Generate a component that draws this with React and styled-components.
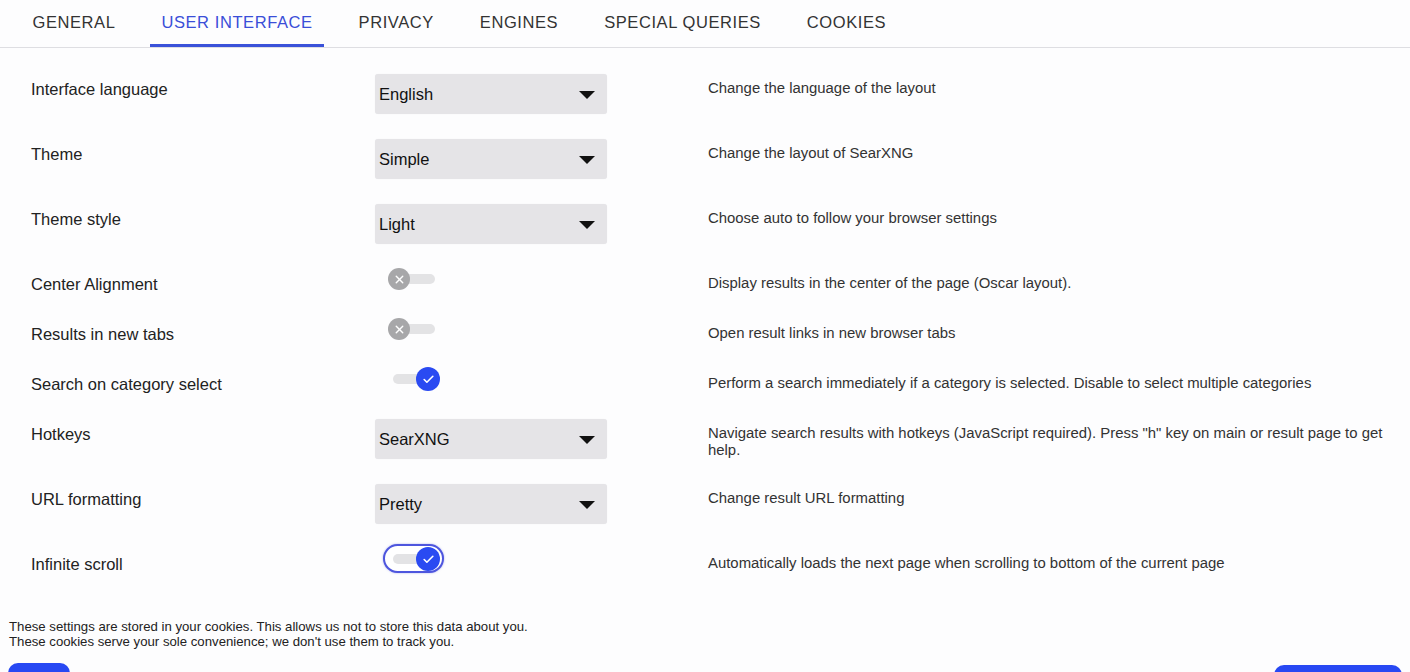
import React from 'react';
import styled, { createGlobalStyle } from 'styled-components';
import { X, Check } from 'lucide-react';

const GlobalStyle = createGlobalStyle`
  html, body {
    margin: 0;
    padding: 0;
    overflow: hidden;
    background: #fdfdfe;
  }
  * {
    box-sizing: border-box;
  }
`;

const Page = styled.div`
  font-family: 'Liberation Sans', Arial, sans-serif;
  color: #222;
  min-height: 672px;
  background: #fdfdfe;
`;

const TabBar = styled.nav`
  display: flex;
  gap: 23px;
  padding-left: 21px;
  border-bottom: 1px solid #dedee2;
`;

const Tab = styled.div`
  height: 47px;
  padding: 0 11.5px;
  display: flex;
  align-items: center;
  font-size: 16.5px;
  letter-spacing: 0.58px;
  text-transform: uppercase;
  color: ${p => (p.$active ? '#3a4ed8' : '#333')};
  border-bottom: 3px solid ${p => (p.$active ? '#3a52d9' : 'transparent')};
`;

const Settings = styled.div`
  padding-top: 26px;
`;

const Row = styled.div`
  display: grid;
  grid-template-columns: 344px 333px 1fr;
  height: ${p => (p.$tall ? 40 : 25)}px;
  margin-bottom: 25px;
  padding: 0 15px 0 31px;
`;

const Label = styled.div`
  font-size: 16.5px;
  line-height: 31px;
  color: #222;
  white-space: nowrap;
`;

const Select = styled.div`
  position: relative;
  width: 232px;
  height: 40px;
  background: #e5e4e7;
  border-radius: 3px;
  padding-left: 4px;
  display: flex;
  align-items: center;
  font-size: 16.5px;
  color: #111;
  box-shadow: 0 0 1px rgba(0, 0, 0, 0.08);

  &::after {
    content: '';
    position: absolute;
    right: 12px;
    top: 17px;
    border-left: 8px solid transparent;
    border-right: 8px solid transparent;
    border-top: 8px solid #111;
  }
`;

const Desc = styled.div`
  font-size: 14.9px;
  line-height: 17px;
  padding-top: 6px;
  color: #333;
`;

const ToggleBox = styled.div`
  position: relative;
  width: 52px;
  height: 22px;
  margin: -1px 0 0 13px;

  &::before {
    content: ${p => (p.$focused ? "''" : 'none')};
    position: absolute;
    left: -5px;
    right: -4px;
    top: -4px;
    bottom: -3px;
    border: 2px solid #4e56de;
    border-radius: 15px;
    background: #fff;
    box-shadow: 0 0 2px rgba(78, 86, 222, 0.5);
  }
`;

const Track = styled.div`
  position: absolute;
  left: ${p => (p.$on ? 5 : 7)}px;
  right: ${p => (p.$on ? 10 : 5)}px;
  top: 6px;
  height: 10px;
  border-radius: 5px;
  background: #e3e3e5;
`;

const Knob = styled.div`
  position: absolute;
  top: ${p => (p.$on ? -1 : 0)}px;
  left: ${p => (p.$on ? 28 : 0)}px;
  width: ${p => (p.$on ? 24 : 22)}px;
  height: ${p => (p.$on ? 24 : 22)}px;
  border-radius: 50%;
  background: ${p => (p.$on ? '#2a4af2' : '#a7a7a9')};
  color: #fff;
  display: flex;
  align-items: center;
  justify-content: center;
`;

const Footer = styled.div`
  padding: 20px 0 0 9px;
  font-size: 13.2px;
  line-height: 15px;
  color: #222;
`;

const Buttons = styled.div`
  display: flex;
  justify-content: space-between;
  padding: 14px 8px 0 8px;
`;

const Button = styled.button`
  width: ${p => p.$w}px;
  height: 36px;
  margin-top: ${p => p.$offset || 0}px;
  border: none;
  border-radius: 10px;
  background: #2748f3;
`;

const Toggle = ({ on, focused }) => (
  <ToggleBox $focused={focused}>
    <Track $on={on} />
    <Knob $on={on}>
      {on ? <Check size={13} strokeWidth={3} /> : <X size={13} strokeWidth={2.5} />}
    </Knob>
  </ToggleBox>
);

const tabs = ['General', 'User interface', 'Privacy', 'Engines', 'Special queries', 'Cookies'];

const rows = [
  { label: 'Interface language', select: 'English', desc: 'Change the language of the layout' },
  { label: 'Theme', select: 'Simple', desc: 'Change the layout of SearXNG' },
  { label: 'Theme style', select: 'Light', desc: 'Choose auto to follow your browser settings' },
  { label: 'Center Alignment', toggle: false, desc: 'Display results in the center of the page (Oscar layout).' },
  { label: 'Results in new tabs', toggle: false, desc: 'Open result links in new browser tabs' },
  {
    label: 'Search on category select',
    toggle: true,
    desc: 'Perform a search immediately if a category is selected. Disable to select multiple categories',
  },
  {
    label: 'Hotkeys',
    select: 'SearXNG',
    desc: 'Navigate search results with hotkeys (JavaScript required). Press "h" key on main or result page to get help.',
  },
  { label: 'URL formatting', select: 'Pretty', desc: 'Change result URL formatting' },
  {
    label: 'Infinite scroll',
    toggle: true,
    focused: true,
    desc: 'Automatically loads the next page when scrolling to bottom of the current page',
  },
];

const App = () => {
  return (
    <Page>
      <GlobalStyle />
      <TabBar>
        {tabs.map(t => (
          <Tab key={t} $active={t === 'User interface'}>
            {t}
          </Tab>
        ))}
      </TabBar>
      <Settings>
        {rows.map(r => (
          <Row key={r.label} $tall={!!r.select}>
            <Label>{r.label}</Label>
            <div>
              {r.select ? <Select>{r.select}</Select> : <Toggle on={r.toggle} focused={r.focused} />}
            </div>
            <Desc>{r.desc}</Desc>
          </Row>
        ))}
      </Settings>
      <Footer>
        These settings are stored in your cookies. This allows us not to store this data about you.
        <br />
        These cookies serve your sole convenience; we don't use them to track you.
      </Footer>
      <Buttons>
        <Button $w={62} aria-label="Save" />
        <Button $w={128} $offset={2} aria-label="Reset defaults" />
      </Buttons>
    </Page>
  );
};

export default App;
